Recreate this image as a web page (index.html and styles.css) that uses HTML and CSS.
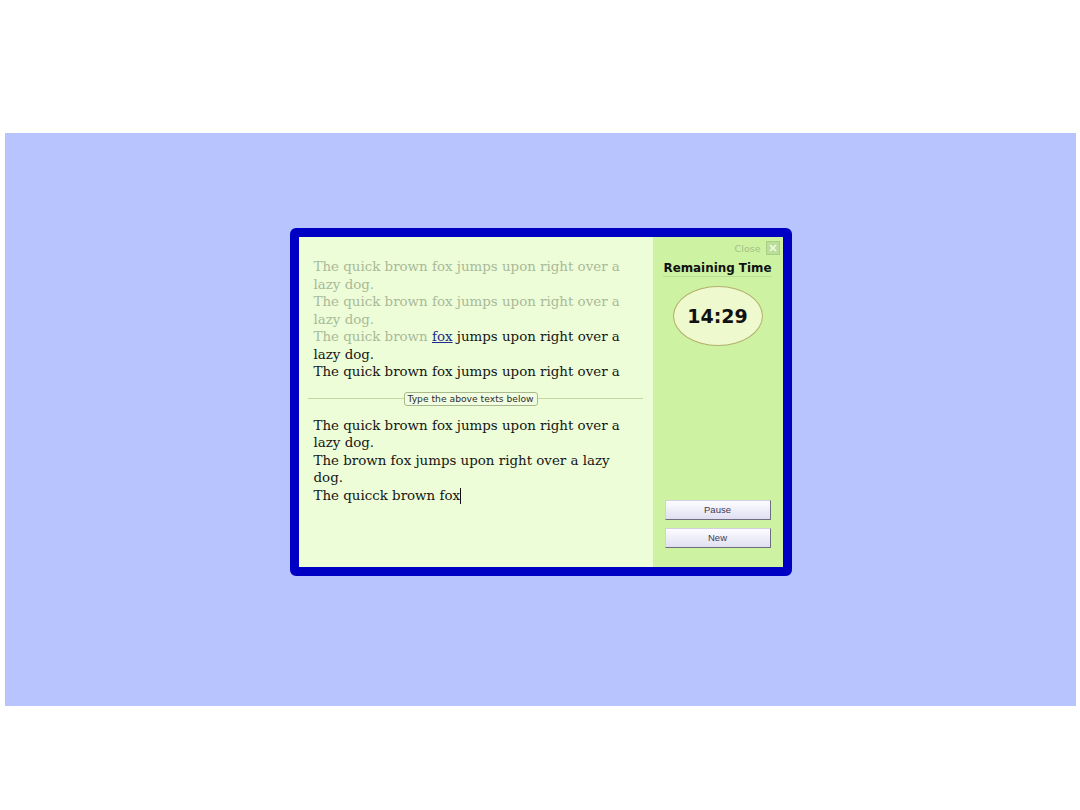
FILE: index.html
```html
<!DOCTYPE html>
<html>
<head>
<meta charset="utf-8">
<link rel="stylesheet" href="styles.css">
</head>
<body>
<div class="band">
  <div class="dialog">
    <div class="left">
      <div class="source">
        <span class="ln done">The quick brown fox jumps upon right over a</span>
        <span class="ln done">lazy dog.</span>
        <span class="ln done">The quick brown fox jumps upon right over a</span>
        <span class="ln done">lazy dog.</span>
        <span class="ln"><span class="done">The quick brown </span><a class="cur">fox</a> jumps upon right over a</span>
        <span class="ln">lazy dog.</span>
        <span class="ln">The quick brown fox jumps upon right over a</span>
      </div>
      <div class="divider"><span class="label">Type the above texts below</span></div>
      <div class="typed">
        <span class="ln">The quick brown fox jumps upon right over a</span>
        <span class="ln">lazy dog.</span>
        <span class="ln">The brown fox jumps upon right over a lazy</span>
        <span class="ln">dog.</span>
        <span class="ln">The quicck brown fox<span class="caret"></span></span>
      </div>
    </div>
    <div class="right">
      <div class="close-row">
        <span class="close-text">Close</span>
        <span class="close-btn"><svg width="12" height="12" viewBox="0 0 12 12"><path d="M3 3 L9 9 M9 3 L3 9" stroke="#f4fbe8" stroke-width="1.6" fill="none"/></svg></span>
      </div>
      <div class="title">Remaining Time</div>
      <div class="clock">14:29</div>
      <div class="spacer"></div>
      <div class="btn">Pause</div>
      <div class="btn">New</div>
    </div>
  </div>
</div>
</body>
</html>
```
FILE: styles.css
```css
html, body {
  margin: 0;
  padding: 0;
  background: #ffffff;
}
body {
  width: 1080px;
  height: 810px;
  overflow: hidden;
}
.band {
  margin: 133px 0 0 5px;
  width: 1071px;
  height: 573px;
  background: #b8c4fe;
  display: flex;
  justify-content: center;
  align-items: flex-start;
  padding-top: 95px;
  box-sizing: border-box;
}
.dialog {
  display: flex;
  width: 484px;
  height: 330px;
  border: 9px solid #0000c4;
  border-radius: 6px;
  background: #edfdd7;
}
.left {
  width: 354px;
  box-sizing: border-box;
  padding: 21px 15px 0 15px;
  background: #edfdd7;
  font-family: "DejaVu Serif", "Liberation Serif", serif;
  font-size: 13.4px;
  line-height: 17.5px;
  color: #151515;
}
.ln {
  display: block;
  white-space: nowrap;
}
.done {
  color: #a9b99a;
}
.cur {
  color: #1c2a8c;
  text-decoration: underline;
}
.divider {
  display: flex;
  align-items: center;
  margin: 11px -5px 0 -6px;
  height: 14px;
}
.divider::before {
  content: "";
  width: 96px;
  height: 1px;
  background: #c6d7a2;
}
.divider::after {
  content: "";
  flex: 1;
  height: 1px;
  background: #c6d7a2;
}
.label {
  font-family: "DejaVu Sans", Verdana, sans-serif;
  font-size: 9.2px;
  line-height: 12px;
  color: #2e2e2e;
  border: 1px solid #a9b98c;
  border-radius: 3px;
  padding: 0 3px;
  background: #f1fde0;
}
.typed {
  margin-top: 11px;
}
.caret {
  display: inline-block;
  width: 1px;
  height: 16px;
  background: #111;
  vertical-align: -4px;
}
.right {
  flex: 1;
  background: #cdf2a2;
  display: flex;
  flex-direction: column;
  align-items: center;
  padding-bottom: 19px;
  box-sizing: border-box;
  font-family: "DejaVu Sans", Verdana, sans-serif;
}
.close-row {
  align-self: stretch;
  display: flex;
  justify-content: flex-end;
  align-items: center;
  gap: 5px;
  padding: 4px 3px 0 0;
  height: 14px;
}
.close-text {
  font-size: 9.5px;
  color: #a3c087;
}
.close-btn {
  width: 14px;
  height: 14px;
  box-sizing: border-box;
  background: #b9df98;
  border: 1px solid #a8cf88;
  display: flex;
  align-items: center;
  justify-content: center;
}
.title {
  margin-top: 6px;
  font-size: 11.9px;
  font-weight: bold;
  line-height: 14px;
  color: #111111;
  padding-bottom: 1px;
  border-bottom: 1px solid #b9dc96;
}
.clock {
  margin-top: 9px;
  width: 88px;
  height: 58px;
  border: 1px solid #b4b06c;
  border-radius: 50%;
  background: #eef9cd;
  display: flex;
  align-items: center;
  justify-content: center;
  font-size: 19px;
  font-weight: bold;
  color: #111111;
}
.spacer {
  flex: 1;
}
.btn {
  width: 106px;
  height: 20px;
  box-sizing: border-box;
  background: linear-gradient(#fdfdff, #dfdff2);
  border: 1px solid #d0d0e0;
  border-right-color: #6e6e7e;
  border-bottom-color: #6e6e7e;
  font-family: "Liberation Sans", Arial, sans-serif;
  font-size: 9.5px;
  line-height: 18px;
  text-align: center;
  color: #3a3a55;
}
.btn + .btn {
  margin-top: 8px;
}
```
